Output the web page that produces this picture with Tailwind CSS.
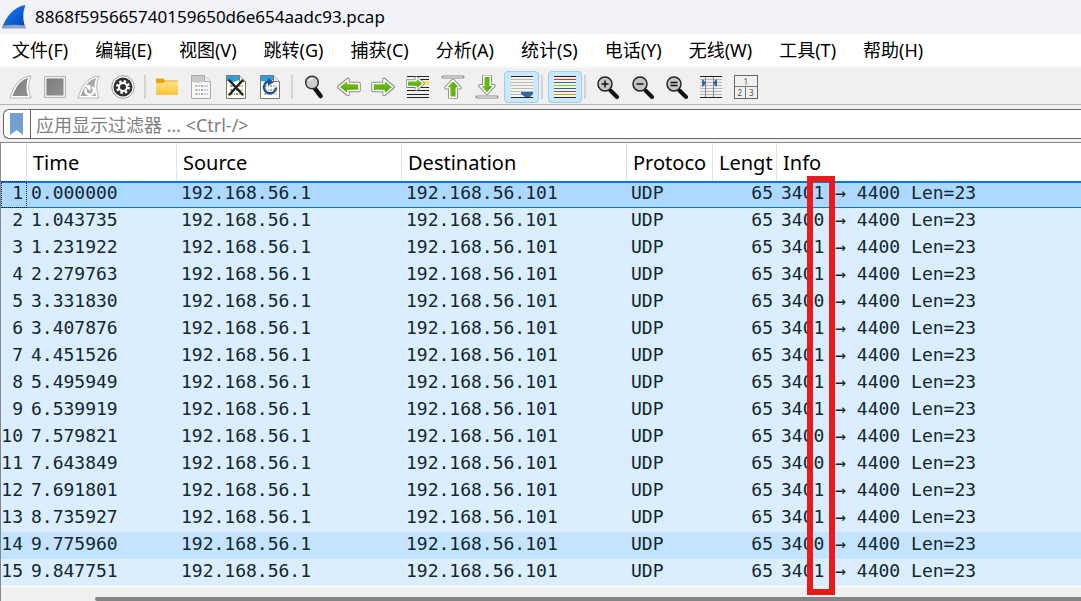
<!DOCTYPE html>
<html lang="zh-CN">
<head>
<meta charset="utf-8">
<meta name="viewport" content="width=device-width, initial-scale=1">
<title>8868f595665740159650d6e654aadc93.pcap</title>
<script src="https://cdn.jsdelivr.net/npm/@tailwindcss/browser@4"></script>
</head>
<body class="flex min-h-screen flex-col overflow-hidden bg-[#f0f0f0] font-['Noto_Sans','Noto_Sans_CJK_SC',sans-serif] text-black">
<svg class="absolute size-0" aria-hidden="true">
  <defs>
    <linearGradient id="blue" x1="0" y1="0" x2="1" y2="1"><stop offset="0" stop-color="#2b8cf0"/><stop offset=".6" stop-color="#0b5bd0"/><stop offset="1" stop-color="#0a3fb0"/></linearGradient>
    <linearGradient id="green" x1="0" y1="0" x2="0" y2="1"><stop offset="0" stop-color="#7acb22"/><stop offset="1" stop-color="#4da000"/></linearGradient>
    <linearGradient id="fold" x1="0" y1="0" x2="0" y2="1"><stop offset="0" stop-color="#ffe08a"/><stop offset="1" stop-color="#fcc436"/></linearGradient>
    <linearGradient id="gray" x1="0" y1="0" x2="1" y2="1"><stop offset="0" stop-color="#7c7c7c"/><stop offset="1" stop-color="#929292"/></linearGradient>
    <g id="lens"><path d="M14.500 15.500 21 22" stroke="#111" stroke-width="4" stroke-linecap="round"/><circle cx="9" cy="9" r="7" fill="#c6c6c6" stroke="#222" stroke-width="1.500"/></g>
    <g id="arrow" stroke-linejoin="round"><path d="M2 12 11 4.500V8.500h11v7H11v4Z" fill="#fff" stroke="#8c8c8c" stroke-width="3.600"/><path d="M2 12 11 4.500V8.500h11v7H11v4Z" fill="url(#green)" stroke="#fff" stroke-width="1.600"/></g>
    <g id="bits" fill="none" stroke-width="2"><path d="M6.500 11h12M6.500 15h12M6.500 19h12" stroke-dasharray="2 1.300 1 1.300"/></g>
  </defs>
</svg>

<header class="flex h-[34px] items-center gap-[9px] bg-[#f1f3f9] pl-[2px]">
  <svg class="size-6" viewBox="0 0 24 24"><path d="M0 23C4 12 11 2 23.500 0c-3 7-3 15 0 23Z" fill="url(#blue)"/><path d="M0 23.500 2 20.500c7-1 14-1 20.500 0l1.500 3Z" fill="#8ea4cb"/></svg>
  <h1 class="text-[17px]">8868f595665740159650d6e654aadc93.pcap</h1>
</header>

<nav class="flex h-[32px] items-center gap-[27px] bg-white pl-3 text-lg whitespace-nowrap">
  <button>文件(F)</button><button>编辑(E)</button><button>视图(V)</button><button>跳转(G)</button><button>捕获(C)</button><button>分析(A)</button><button>统计(S)</button><button>电话(Y)</button><button>无线(W)</button><button>工具(T)</button><button>帮助(H)</button>
</nav>

<div class="flex h-[39px] items-center border-t-2 border-b border-t-[#f7f7f7] border-b-[#b4b4b4] pt-[2px] pl-1" role="toolbar">
  <div class="grid w-[136px] grid-cols-4 justify-items-center">
    <button aria-label="Start"><svg class="size-6" viewBox="0 0 24 24"><path d="M1 23C4 12 10 2 22 1c-3 7-3 15 0 22Z" fill="#fff" stroke="#b5b5b5"/><path d="M3.500 21C7 12 11 5 19 3c-2 6-2 12 0 18Z" fill="url(#gray)"/></svg></button>
    <button aria-label="Stop"><svg class="size-6" viewBox="0 0 24 24"><path d="M1.500 1.500h21v21h-21Z" fill="#eee" stroke="#b5b5b5"/><path d="M3.500 3.500h17v17h-17Z" fill="url(#gray)"/></svg></button>
    <button aria-label="Restart"><svg class="size-6" viewBox="0 0 24 24"><path d="M1 23C4 12 10 2 22 1c-3 7-3 15 0 22Z" fill="#fff" stroke="#b5b5b5"/><path d="M3.500 21C7 12 11 5 19 3c-2 6-2 12 0 18Z" fill="#a6a6a6"/><path d="M9 13.500a4.200 4.200 0 1 0 6-1.500" fill="none" stroke="#fff" stroke-width="2.500"/><path d="M7 10h6.500v6.500Z" fill="#fff"/></svg></button>
    <button aria-label="Options"><svg class="size-6" viewBox="0 0 24 24"><circle cx="12" cy="12" r="11.300" fill="#fff" stroke="#9a9a9a"/><circle cx="12" cy="12" r="9.500" fill="#303030"/><circle cx="12" cy="12" r="5.500" fill="none" stroke="#fff" stroke-width="3" stroke-dasharray="2.300 2.020"/><circle cx="12" cy="12" r="4" fill="none" stroke="#fff" stroke-width="2"/></svg></button>
  </div>
  <span class="flex w-[10px] justify-center"><i class="h-6 w-[2px] bg-[#d4d4d4]"></i></span>
  <div class="grid w-[137px] grid-cols-4 justify-items-center">
    <button aria-label="Open"><svg class="size-6" viewBox="0 0 24 24"><path d="M1 4.500q0-1 1-1h6l2 2h12q1 0 1 1V12H1Z" fill="#e7a50d"/><path d="M1 8h7l2-1.500h13V19q0 1-1 1H2q-1 0-1-1Z" fill="url(#fold)"/></svg></button>
    <button aria-label="Save"><svg class="size-6" viewBox="0 0 24 24"><path d="M2.500.500h13l6 6v17h-19Z" fill="#f7f7f7" stroke="#aaa"/><path d="M3 1h12v5l-5 2-7-1Z" fill="#c8c8c8"/><path d="M15.500.500v6h6" fill="#eee" stroke="#aaa"/><use href="#bits" stroke="#aaa"/></svg></button>
    <button aria-label="Close"><svg class="size-6" viewBox="0 0 24 24"><path d="M2.500.500h13l6 6v17h-19Z" fill="#fffff0" stroke="#777"/><path d="M3 1h12v4l-5 2-7-1Z" fill="#2b9fe0"/><path d="M15.500.500v6h6" fill="#eee" stroke="#777"/><use href="#bits" stroke="#8a8a80"/><path d="m5.500 5.500 13 14m0-14-13 14" stroke="#222" stroke-width="2.500" stroke-linecap="round"/></svg></button>
    <button aria-label="Reload"><svg class="size-6" viewBox="0 0 24 24"><path d="M2.500.500h13l6 6v17h-19Z" fill="#fffff0" stroke="#777"/><path d="M3 1h12v4l-5 2-7-1Z" fill="#2b9fe0"/><path d="M15.500.500v6h6" fill="#eee" stroke="#777"/><use href="#bits" stroke="#aaa"/><path d="M10.500 6.500a6 6 0 1 0 7.500 6" fill="none" stroke="#23529a" stroke-width="2.500"/><path d="m10 3 6 4-6 4Z" fill="#23529a"/></svg></button>
  </div>
  <span class="flex w-[10px] justify-center"><i class="h-6 w-[2px] bg-[#d4d4d4]"></i></span>
  <div class="grid w-[242px] grid-cols-7 items-center justify-items-center">
    <button aria-label="Find"><svg class="size-6" viewBox="0 0 24 24" fill="none"><path d="M13 13.500 18.500 21" stroke="#111" stroke-width="4.500" stroke-linecap="round"/><circle cx="10" cy="7.500" r="6.300" fill="#ccc" stroke="#333" stroke-width="1.500"/><path d="M7 6q1-2.500 4-2.500" stroke="#f4f4f4" stroke-width="1.500"/></svg></button>
    <button aria-label="Back"><svg class="size-6" viewBox="0 0 24 24"><use href="#arrow"/></svg></button>
    <button aria-label="Forward"><svg class="size-6 -scale-x-100" viewBox="0 0 24 24"><use href="#arrow"/></svg></button>
    <button aria-label="Go to packet"><svg class="size-6" viewBox="0 0 24 24"><path d="M1 1.500h22M12 4.500h11M1 12.500h22M1 15.500h22M1 19.500h22M1 22.500h22" stroke="#222"/><path d="M14 6h9v4h-9Z" fill="#ffe44d"/><g transform="matrix(-.8 0 0 .8 19 -1)"><use href="#arrow"/></g></svg></button>
    <button aria-label="First packet"><svg class="size-6" viewBox="0 0 24 24"><path d="M2 2h20" stroke="#8c8c8c" stroke-width="3" stroke-linecap="round"/><path d="M2 2h20" stroke="#fff"/><g transform="matrix(0 .85 .95 0 .6 3.500)"><use href="#arrow"/></g></svg></button>
    <button aria-label="Last packet"><svg class="size-6" viewBox="0 0 24 24"><path d="M2 22h20" stroke="#8c8c8c" stroke-width="3" stroke-linecap="round"/><path d="M2 22h20" stroke="#fff"/><g transform="matrix(0 -.85 .95 0 .6 20)"><use href="#arrow"/></g></svg></button>
    <button aria-label="Auto scroll" aria-pressed="true" class="flex h-8 w-full items-center justify-center rounded-sm border border-[#99cff7] bg-[#cce8ff]"><svg class="size-6" viewBox="0 0 24 24"><path d="M1 1h22v22H1Z" fill="#f4f4ec"/><path d="M1 4.500h22M1 7.500h22M1 10.500h22M1 13.500h22M1 16.500h22M1 19.500h22" stroke="#b9b9b4"/><path d="M1 1.500h22M1 22.500h22" stroke="#222"/><path d="M11 17h12v2l-3 3h-5l-4-3Z" fill="#3366a8"/></svg></button>
  </div>
  <span class="flex w-[9px] pl-[2px]"><i class="h-6 w-[2px] bg-[#d4d4d4]"></i></span>
  <button aria-label="Colorize" aria-pressed="true" class="flex h-8 w-[34px] items-center justify-center rounded-sm border border-[#99cff7] bg-[#cce8ff]"><svg class="size-6" viewBox="0 0 24 24"><path d="M1 1h22v22H1Z" fill="#f4f4ec"/><path d="M1 1.500h22M1 22.500h22" stroke="#222"/><path d="M1 4.500h22" stroke="#ef2929"/><path d="M1 7.500h22" stroke="#3465a4"/><path d="M1 10.500h22" stroke="#73d216"/><path d="M1 13.500h22" stroke="#3465a4"/><path d="M1 16.500h22" stroke="#75507b"/><path d="M1 19.500h22" stroke="#c4a000"/></svg></button>
  <span class="flex w-[9px] pl-[2px]"><i class="h-6 w-[2px] bg-[#d4d4d4]"></i></span>
  <div class="grid w-[172px] grid-cols-5 items-center justify-items-center">
    <button aria-label="Zoom in"><svg class="size-6" viewBox="0 0 24 24"><use href="#lens"/><path d="M5.500 9h7M9 5.500v7" stroke="#111" stroke-width="1.500"/></svg></button>
    <button aria-label="Zoom out"><svg class="size-6" viewBox="0 0 24 24"><use href="#lens"/><path d="M5.500 9h7" stroke="#111" stroke-width="1.500"/></svg></button>
    <button aria-label="Normal size"><svg class="size-6" viewBox="0 0 24 24"><use href="#lens"/><path d="M5.500 7.500h7M5.500 10.500h7" stroke="#111" stroke-width="1.300"/></svg></button>
    <button aria-label="Resize columns"><svg class="size-6" viewBox="0 0 24 24"><path d="M1 4.500h22M1 7.500h22M1 10.500h22M1 13.500h22M1 16.500h22M1 19.500h22" stroke="#b9b9b4"/><path d="M1 1.500h22M1 22.500h22" stroke="#222"/><path d="M6.500 2v20M14.500 2v20" stroke="#888"/><path d="M3 4.500h1l3 3.500-3 3.500H3ZM18 4.500h-1L14 8l3 3.500h1Z" fill="#3465a4"/></svg></button>
    <button aria-label="Layout" class="grid size-6 grid-cols-2 grid-rows-2 border border-[#666] text-[8px] leading-[11px] text-[#555]"><span class="col-span-2 border-b border-[#777]">1</span><span class="border-r border-[#777]">2</span><span>3</span></button>
  </div>
</div>

<div class="pt-1 pl-[3px]">
  <div class="flex h-[30px] items-stretch rounded-l-md border border-r-0 border-[#666] bg-white">
    <button aria-label="Bookmark" class="flex w-[27px] items-center justify-center border-r border-[#666] pr-px"><svg class="h-[22px] w-[13px]" viewBox="0 0 13 22"><path d="M0 0h13v22l-6.500-5L0 22Z" fill="#739fd0"/></svg></button>
    <input aria-label="应用显示过滤器" placeholder="应用显示过滤器 … &lt;Ctrl-/&gt;" class="min-w-0 flex-1 pt-[2px] pl-[5px] text-lg placeholder:text-[#808080] focus:outline-none">
  </div>
</div>

<main class="relative mt-[3px] flex-1 border-t border-l border-[#828790]">
  <table class="w-full table-fixed border-separate border-spacing-0 font-['DejaVu_Sans_Mono',monospace] text-lg leading-6 whitespace-pre text-[#12272e]">
    <colgroup><col class="w-[26px]"><col class="w-[150px]"><col class="w-[225px]"><col class="w-[225px]"><col class="w-[86px]"><col class="w-[64px]"><col></colgroup>
    <thead>
      <tr class="h-[38px] bg-white text-left font-['Noto_Sans',sans-serif] text-xl text-black *:border-r *:border-[#e2e2e2] *:p-0 *:pt-[2px] *:pl-[6px] *:font-normal *:last:border-r-0">
        <th></th><th>Time</th><th>Source</th><th>Destination</th><th>Protoco</th><th>Lengt</th><th>Info</th>
      </tr>
    </thead>
    <tbody id="packets"></tbody>
  </table>
  <div class="flex h-[15px] items-end border-t border-white pl-[94px]"><div class="h-1 flex-1 rounded-l-full bg-[#858585]"></div></div>
  <div class="pointer-events-none absolute top-[33px] left-[806px] h-[419px] w-7 border-6 border-[#e81a1c]"></div>
</main>

<script>
const packets = [["0.000000",3401],["1.043735",3400],["1.231922",3401],["2.279763",3401],["3.331830",3400],["3.407876",3401],["4.451526",3401],["5.495949",3401],["6.539919",3401],["7.579821",3400],["7.643849",3400],["7.691801",3401],["8.735927",3401],["9.775960",3400],["9.847751",3401]];
document.getElementById("packets").innerHTML = packets.map(([time, port], i) => {
  const state = i === 0 ? "bg-[#add8ff] shadow-[inset_0_2px_#0078d7,inset_0_-1px_#0078d7]" : i === 13 ? "bg-[#c4e3ff]" : "bg-[#daeeff]";
  const first = i === 0 ? "outline-1 -outline-offset-1 outline-dotted outline-[#222]" : "";
  return `<tr class="h-[27px] ${state} *:p-0 *:pb-[3px]"><td class="${first}"><div class="flex justify-end pr-1">${i + 1}</div></td><td><div class="pl-1">${time}</div></td><td><div class="pl-1">192.168.56.1</div></td><td><div class="pl-1">192.168.56.101</div></td><td><div class="pl-1">UDP</div></td><td><div class="pr-1 text-right">65</div></td><td><div class="pl-1">${port} → 4400 Len=23</div></td></tr>`;
}).join("");
</script>
</body>
</html>
